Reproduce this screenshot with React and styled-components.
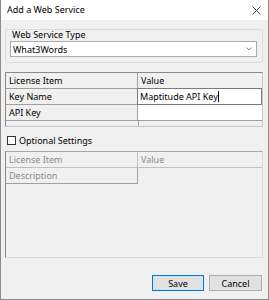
import React from 'react'
import styled, { createGlobalStyle } from 'styled-components'

const GlobalStyle = createGlobalStyle`
  html, body {
    margin: 0;
    padding: 0;
    background: #ffffff;
  }
  body {
    font-family: "Noto Sans", "Liberation Sans", sans-serif;
    font-size: 9px;
    color: #000000;
  }
`

const App = () => {
  return (
    <>
      <GlobalStyle />
      <Window>
        <TitleBar>
          <span>Add a Web Service</span>
          <CloseButton>
            <svg width="9" height="9" viewBox="0 0 9 9">
              <path d="M0.5 0.5 L8.5 8.5 M8.5 0.5 L0.5 8.5" stroke="#333" strokeWidth="0.9" fill="none" />
            </svg>
          </CloseButton>
        </TitleBar>
        <Body>
          <GroupBox>
            <GroupLabel>Web Service Type</GroupLabel>
            <Combo>
              <span>What3Words</span>
              <svg width="6" height="4" viewBox="0 0 6 4">
                <path d="M0.5 0.5 L3 3 L5.5 0.5" stroke="#808080" strokeWidth="0.9" fill="none" />
              </svg>
            </Combo>
          </GroupBox>

          <Grid>
            <Row>
              <NameCell>License Item</NameCell>
              <ValueCell>Value</ValueCell>
            </Row>
            <Row>
              <NameCell>Key Name</NameCell>
              <EditCell>
                Maptitude API Key<Caret />
              </EditCell>
            </Row>
            <Row>
              <NameCell>API Key</NameCell>
              <ValueCell $white />
            </Row>
            <Filler />
          </Grid>

          <CheckRow>
            <CheckBox />
            <span>Optional Settings</span>
          </CheckRow>

          <Grid $disabled $grow>
            <Row $disabled>
              <NameCell $disabled>License Item</NameCell>
              <ValueCell $disabled>Value</ValueCell>
            </Row>
            <Row $disabled $open>
              <NameCell $disabled $dark>Description</NameCell>
              <ValueCell $disabled />
            </Row>
          </Grid>

          <Footer>
            <Button $focused>Save</Button>
            <Button>Cancel</Button>
          </Footer>
        </Body>
      </Window>
    </>
  )
}

export default App

const Window = styled.div`
  width: 269px;
  height: 300px;
  box-sizing: border-box;
  border: 1px solid #8c8c8c;
  border-top: none;
  display: flex;
  flex-direction: column;
  background: #f0f0f0;
`

const TitleBar = styled.div`
  height: 20px;
  flex: none;
  background: #ffffff;
  display: flex;
  align-items: center;
  justify-content: space-between;
  padding: 0 7px 0 6px;
  font-size: 9px;
  line-height: 20px;
`

const CloseButton = styled.div`
  display: flex;
  align-items: center;
  svg {
    display: block;
  }
`

const Body = styled.div`
  flex: 1;
  display: flex;
  flex-direction: column;
  padding: 9px 5px 8px 4px;
  min-height: 0;
`

const GroupBox = styled.div`
  border: 1px solid #dcdcdc;
  border-radius: 2px;
  padding: 0 5px 5px 4px;
  display: flex;
  flex-direction: column;
`

const GroupLabel = styled.div`
  height: 11px;
  line-height: 9px;
  padding-left: 2px;
`

const Combo = styled.div`
  height: 16px;
  box-sizing: border-box;
  border: 1px solid #acacac;
  background: #ffffff;
  display: flex;
  align-items: center;
  justify-content: space-between;
  padding: 0 4px 0 2px;
  svg {
    display: block;
  }
`

const Grid = styled.div`
  margin-top: ${p => (p.$disabled ? '6px' : '9px')};
  border: 1px solid ${p => (p.$disabled ? '#d8d8d8' : '#c8c8c8')};
  border-left-color: #8a8a8a;
  border-top-color: ${p => (p.$disabled ? '#a8a8a8' : '#8a8a8a')};
  display: flex;
  flex-direction: column;
  flex: ${p => (p.$grow ? 1 : 'none')};
`

const Row = styled.div`
  display: grid;
  grid-template-columns: 132px 1fr;
  height: 15px;
  box-sizing: content-box;
  border-bottom: 1px solid ${p => (p.$disabled ? (p.$open ? 'transparent' : '#c0c0c0') : '#a0a0a0')};
`

const NameCell = styled.div`
  border-right: 1px solid ${p => (p.$disabled && !p.$dark ? '#c0c0c0' : '#a0a0a0')};
  border-bottom: ${p => (p.$dark ? '1px solid #a0a0a0' : 'none')};
  padding-left: 3px;
  line-height: 15px;
  color: ${p => (p.$disabled ? '#8c8c8c' : '#000000')};
  white-space: nowrap;
`

const ValueCell = styled.div`
  background: ${p => (p.$white ? '#ffffff' : 'transparent')};
  padding-left: 3px;
  line-height: 15px;
  color: ${p => (p.$disabled ? '#8c8c8c' : '#000000')};
  white-space: nowrap;
`

const EditCell = styled.div`
  background: #ffffff;
  border: 1px solid #7a7a7a;
  margin: -1px 0 -1px -1px;
  padding-left: 2px;
  line-height: 15px;
  white-space: nowrap;
  display: flex;
  align-items: center;
`

const Caret = styled.span`
  display: inline-block;
  width: 1px;
  height: 11px;
  background: #000000;
`

const Filler = styled.div`
  height: 5px;
  width: 132px;
  border-right: 1px solid #a0a0a0;
`

const CheckRow = styled.div`
  display: flex;
  align-items: center;
  gap: 3px;
  margin-top: 8px;
  padding-left: 2px;
  height: 10px;
`

const CheckBox = styled.div`
  width: 9px;
  height: 9px;
  box-sizing: border-box;
  border: 1px solid #333333;
  background: #ffffff;
`

const Footer = styled.div`
  display: flex;
  justify-content: flex-end;
  gap: 5px;
  margin-top: 17px;
  padding-right: 1px;
`

const Button = styled.div`
  width: ${p => (p.$focused ? '52px' : '53px')};
  height: 16px;
  box-sizing: border-box;
  border: 1px solid ${p => (p.$focused ? '#0078d7' : '#adadad')};
  box-shadow: ${p => (p.$focused ? 'inset 0 0 0 1px #cce4f7' : 'none')};
  background: #e1e1e1;
  display: flex;
  align-items: center;
  justify-content: center;
  font-size: 9px;
`
